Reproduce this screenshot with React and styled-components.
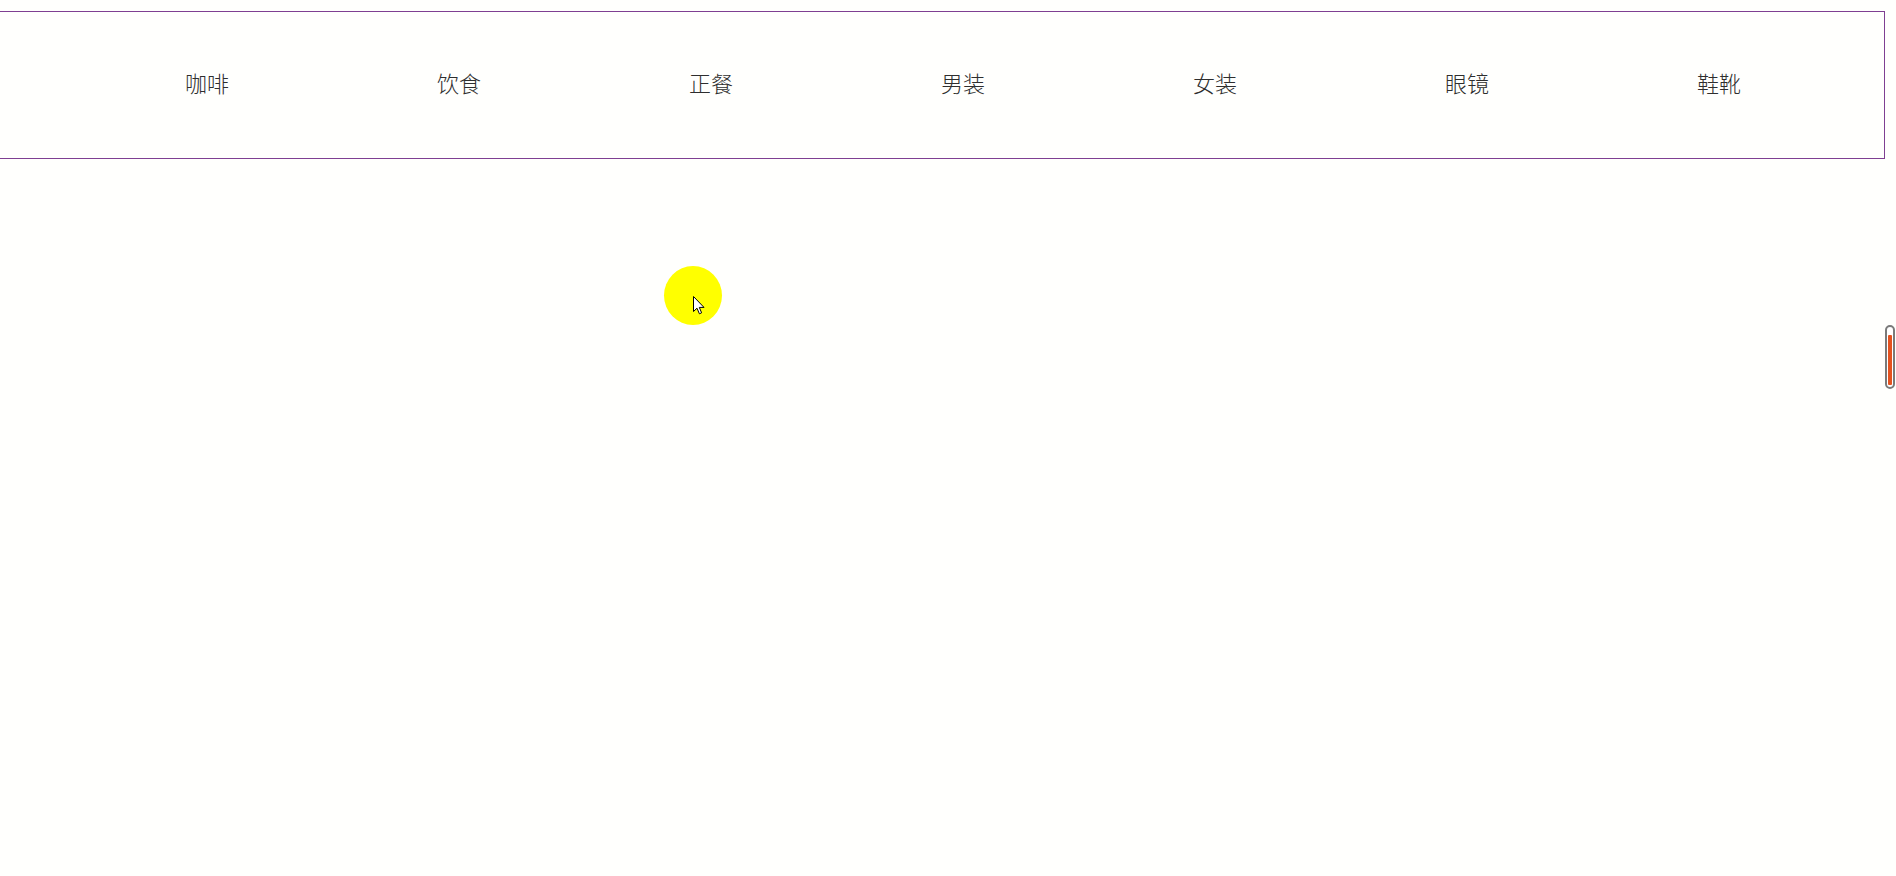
import React from "react";
import styled, { createGlobalStyle } from "styled-components";

const GlobalStyle = createGlobalStyle`
  html, body {
    margin: 0;
    padding: 0;
    background: #fffffd;
    font-family: "Noto Sans CJK SC", "Noto Sans", sans-serif;
  }
  #root {
    min-height: 876px;
  }
`;

const CATEGORIES = ["咖啡", "饮食", "正餐", "男装", "女装", "眼镜", "鞋靴"];

const Page = styled.div`
  position: relative;
  width: 1896px;
  height: 876px;
  overflow: hidden;
  padding-top: 11px;
  box-sizing: border-box;
`;

const NavBar = styled.ul`
  display: flex;
  align-items: center;
  box-sizing: border-box;
  width: 1897px;
  height: 148px;
  margin: 0 0 0 -12px;
  padding: 0 0 0 92px;
  list-style: none;
  border: 1px solid #7f3f92;
`;

const NavItem = styled.li`
  flex: 0 0 252px;
  text-align: center;
  font-size: 22px;
  font-weight: 300;
  line-height: 1;
  color: #2e2e2e;
  margin-top: -7px;
`;

const CursorHalo = styled.div`
  position: absolute;
  left: ${(p) => p.x - 29}px;
  top: ${(p) => p.y - 30}px;
  width: 58px;
  height: 59px;
  border-radius: 50%;
  background: #ffff00;
`;

const CursorIcon = styled.svg`
  position: absolute;
  left: ${(p) => p.x}px;
  top: ${(p) => p.y}px;
  width: 12px;
  height: 19px;
`;

const Gauge = styled.div`
  position: absolute;
  right: 1px;
  top: 325px;
  width: 10px;
  height: 64px;
  box-sizing: border-box;
  border: 2px solid #7a7a7a;
  border-radius: 6px;
  background: #fff;
  display: flex;
  flex-direction: column;
  justify-content: flex-end;
  padding: 0 1px 2px;
`;

const GaugeFill = styled.div`
  height: 50px;
  background: #e4521f;
  border-radius: 1px;
`;

export default function App() {
  const cursor = { x: 693, y: 296 };
  return (
    <>
      <GlobalStyle />
      <Page>
        <NavBar>
          {CATEGORIES.map((name) => (
            <NavItem key={name}>{name}</NavItem>
          ))}
        </NavBar>

        <CursorHalo x={cursor.x} y={cursor.y} />
        <CursorIcon x={cursor.x} y={cursor.y} viewBox="0 0 12 19">
          <path
            d="M0.5 0.5 L0.5 15.5 L4 12.2 L6.4 17.8 L8.6 16.8 L6.3 11.4 L11 11.4 Z"
            fill="#fff"
            stroke="#000"
            strokeWidth="1"
            strokeLinejoin="round"
          />
        </CursorIcon>

        <Gauge>
          <GaugeFill />
        </Gauge>
      </Page>
    </>
  );
}
